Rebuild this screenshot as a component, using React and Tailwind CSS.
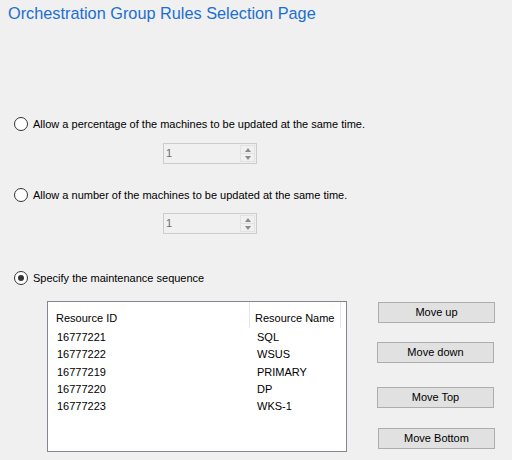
import React from "react";

const ROWS = [
  { id: "16777221", name: "SQL" },
  { id: "16777222", name: "WSUS" },
  { id: "16777219", name: "PRIMARY" },
  { id: "16777220", name: "DP" },
  { id: "16777223", name: "WKS-1" },
];

function Radio({ checked, label }) {
  return (
    <div className="flex items-center h-[14px]">
      <div className="ml-[14px] w-[14px] h-[14px] rounded-full border border-[#333333] bg-white flex items-center justify-center shrink-0">
        {checked && <div className="w-[6px] h-[6px] rounded-full bg-[#333333]" />}
      </div>
      <span className="ml-[5px] text-[11px] leading-[14px] text-black whitespace-nowrap">{label}</span>
    </div>
  );
}

function Spinner() {
  return (
    <div className="ml-[163px] w-[94px] h-[21px] border border-[#cccccc] bg-[#f0f0f0] flex">
      <span className="flex-1 pl-[2px] text-[11px] leading-[19px] text-[#6d6d6d]">1</span>
      <div className="w-[16px] flex flex-col py-[1px] pr-[1px]">
        <div className="flex-1 border border-[#e2e2e2] flex items-center justify-center">
          <svg width="6" height="4" viewBox="0 0 6 4"><path d="M0 4 L3 0 L6 4 Z" fill="#8a8a8a" /></svg>
        </div>
        <div className="flex-1 border border-[#e2e2e2] border-t-0 flex items-center justify-center">
          <svg width="6" height="4" viewBox="0 0 6 4"><path d="M0 0 L3 4 L6 0 Z" fill="#8a8a8a" /></svg>
        </div>
      </div>
    </div>
  );
}

function Btn({ label, className }) {
  return (
    <button className={`w-[117px] h-[21px] bg-[#e1e1e1] border border-[#adadad] text-[11px] text-black leading-[19px] text-center ${className}`}>
      {label}
    </button>
  );
}

export default function App() {
  return (
    <div className="w-[512px] h-[460px] bg-[#f0f0f0] overflow-hidden font-['Liberation_Sans',Arial,sans-serif]">
      {/* Title */}
      <div className="pt-[3px] pl-[8px] text-[16.3px] leading-[20px] text-[#1c6fd1] whitespace-nowrap">
        Orchestration Group Rules Selection Page
      </div>

      {/* Option 1 */}
      <div className="mt-[94px]">
        <Radio label="Allow a percentage of the machines to be updated at the same time." />
      </div>
      <div className="mt-[12px]">
        <Spinner />
      </div>

      {/* Option 2 */}
      <div className="mt-[24px]">
        <Radio label="Allow a number of the machines to be updated at the same time." />
      </div>
      <div className="mt-[11px]">
        <Spinner />
      </div>

      {/* Option 3 */}
      <div className="mt-[37px]">
        <Radio checked label="Specify the maintenance sequence" />
      </div>

      {/* Sequence list + buttons */}
      <div className="mt-[16px] flex items-start">
        <div className="ml-[47px] w-[300px] h-[151px] border border-[#828790] bg-white">
          <div className="flex h-[26px] text-[11px] text-black">
            <div className="w-[202px] pl-[8px] pt-[8px] border-r border-[#e5e5e5]">Resource ID</div>
            <div className="w-[91px] pl-[5px] pt-[8px] border-r border-[#e5e5e5]">Resource Name</div>
          </div>
          <div className="pt-[1px]">
            {ROWS.map((r) => (
              <div key={r.id} className="flex h-[17.3px] text-[11px] leading-[17.3px] text-black">
                <span className="w-[209px] pl-[9px]">{r.id}</span>
                <span>{r.name}</span>
              </div>
            ))}
          </div>
        </div>
        <div className="flex flex-col">
          <Btn label="Move up" className="ml-[31px] mt-[1px]" />
          <Btn label="Move down" className="ml-[30px] mt-[19px]" />
          <Btn label="Move Top" className="ml-[30px] mt-[24px]" />
          <Btn label="Move Bottom" className="ml-[31px] mt-[20px]" />
        </div>
      </div>
    </div>
  );
}
